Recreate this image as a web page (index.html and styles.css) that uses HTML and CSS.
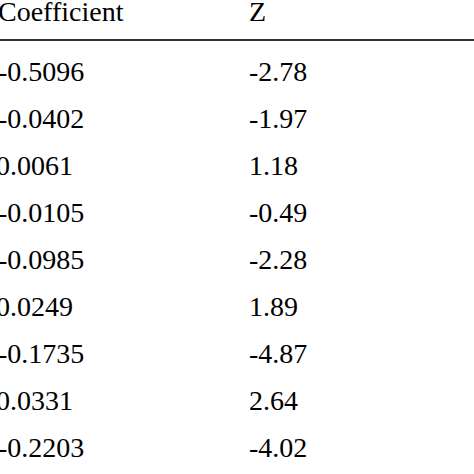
FILE: index.html
```html
<!DOCTYPE html>
<html lang="en">
<head>
  <meta charset="UTF-8">
  <title>Coefficients</title>
  <link rel="stylesheet" href="styles.css">
</head>
<body>

<div class="tabla">
  <!-- cabecera -->
  <div class="fila cabecera">
    <span>Coefficient</span>
    <span>Z</span>
  </div>

  <!-- valores -->
  <div class="cuerpo">
    <div class="fila"><span>-0.5096</span><span>-2.78</span></div>
    <div class="fila"><span>-0.0402</span><span>-1.97</span></div>
    <div class="fila"><span class="pos">0.0061</span><span>1.18</span></div>
    <div class="fila"><span>-0.0105</span><span>-0.49</span></div>
    <div class="fila"><span>-0.0985</span><span>-2.28</span></div>
    <div class="fila"><span class="pos">0.0249</span><span>1.89</span></div>
    <div class="fila"><span>-0.1735</span><span>-4.87</span></div>
    <div class="fila"><span class="pos">0.0331</span><span>2.64</span></div>
    <div class="fila"><span>-0.2203</span><span>-4.02</span></div>
  </div>
</div>

</body>
</html>
```

FILE: styles.css
```css
body {
  margin: 0;
  background-color: #fff;
  color: #000;
  font-family: "Liberation Serif", "Times New Roman", serif;
  font-size: 28px;
  overflow: hidden;
}

.tabla {
  margin-left: -2px;
}

.fila {
  display: grid;
  grid-template-columns: 251px 1fr;
  white-space: nowrap;
}

.cabecera {
  margin-top: -4px;
  line-height: 31px;
  padding-bottom: 12px;
  border-bottom: 2px solid #333;
}

.cuerpo {
  padding-top: 7px;
}

.cuerpo .fila {
  line-height: 47px;
}

.pos {
  margin-left: -2px;
}
```
